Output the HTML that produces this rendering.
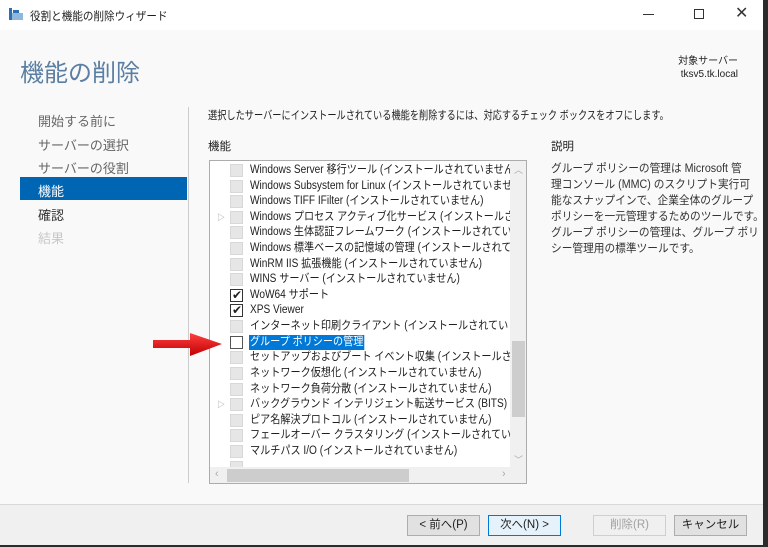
<!DOCTYPE html>
<html><head><meta charset="utf-8">
<style>
*{margin:0;padding:0;box-sizing:border-box}
body{width:768px;height:547px;overflow:hidden;background:#f9f9f9;font-family:"Liberation Sans","Noto Sans CJK JP",sans-serif;color:#1e1e1e;position:relative;font-size:12px}
.abs{position:absolute;white-space:nowrap}
.sx{display:inline-block;transform-origin:0 0}
.nav{position:absolute;left:38px;font-size:13px;color:#666}
.row{position:absolute;left:0;height:16px;line-height:15px;font-size:11.5px;white-space:nowrap;color:#1e1e1e}
.cb{position:absolute;left:20px;top:1px;width:13px;height:13px;background:#e6e6e6;border:1px solid #d8d8d8}
.cb.on{background:#fff;border:1px solid #333}
.cb.w{background:#fff;border:1px solid #555}
.row span.t{position:absolute;left:40px;transform:scaleX(.88);transform-origin:0 0}
.btn{position:absolute;top:515px;width:73px;height:21px;border:1px solid #adadad;background:#e1e1e1;font-size:11.5px;text-align:center;line-height:19px;color:#1e1e1e}
.desc div{height:16px;white-space:nowrap;transform:scaleX(.93);transform-origin:0 0}
</style></head><body>
<div class="abs" style="left:0;top:0;width:768px;height:30px;background:#fff"></div>
<svg class="abs" style="left:8px;top:7px" width="16" height="14"><rect x="1" y="1" width="3" height="12" fill="#2b6fb4"/><rect x="4" y="6" width="11" height="7" fill="#8fb8dc"/><rect x="5" y="3" width="6" height="3" fill="#2b6fb4"/></svg>
<div class="abs" style="left:30px;top:8px;font-size:11.5px"><span class="sx" style="transform:scaleX(.92)">役割と機能の削除ウィザード</span></div>
<div class="abs" style="left:643px;top:14px;width:11px;height:1px;background:#333"></div>
<div class="abs" style="left:694px;top:9px;width:10px;height:10px;border:1px solid #333"></div>
<div class="abs" style="left:735px;top:3px;font-size:16px;color:#333">✕</div>
<div class="abs" style="left:20px;top:53px;font-size:24px;color:#5a7fa3">機能の削除</div>
<div class="abs" style="left:600px;top:55px;width:138px;text-align:right;font-size:10px;line-height:13px">対象サーバー<br>tksv5.tk.local</div>
<div class="nav" style="top:111px">開始する前に</div>
<div class="nav" style="top:135px">サーバーの選択</div>
<div class="nav" style="top:158px">サーバーの役割</div>
<div class="abs" style="left:20px;top:177px;width:167px;height:23px;background:#0066b4"></div>
<div class="nav" style="top:181px;color:#fff">機能</div>
<div class="nav" style="top:205px;color:#333">確認</div>
<div class="nav" style="top:228px;color:#c8c8c8">結果</div>
<div class="abs" style="left:188px;top:107px;width:1px;height:376px;background:#ccc"></div>
<div class="abs" style="left:208px;top:107px;font-size:11.5px"><span class="sx" style="transform:scaleX(.80)">選択したサーバーにインストールされている機能を削除するには、対応するチェック ボックスをオフにします。</span></div>
<div class="abs" style="left:208px;top:138px;font-size:11.5px">機能</div>
<div class="abs" style="left:551px;top:138px;font-size:11.5px">説明</div>
<div class="abs desc" style="left:551px;top:161px;font-size:11.5px;line-height:16px;color:#333">
<div>グループ ポリシーの管理は Microsoft 管</div>
<div>理コンソール (MMC) のスクリプト実行可</div>
<div>能なスナップインで、企業全体のグループ</div>
<div>ポリシーを一元管理するためのツールです。</div>
<div>グループ ポリシーの管理は、グループ ポリ</div>
<div>シー管理用の標準ツールです。</div>
</div>
<div class="abs" style="left:763px;top:0;width:5px;height:547px;background:#2b2b2b"></div>
<div class="abs" style="left:209px;top:160px;width:318px;height:324px;background:#fff;border:1px solid #acacac;overflow:hidden">
<div style="position:absolute;left:0;top:0;width:300px;height:306px;overflow:hidden">
<div class="row" style="top:2px"><i class="cb"></i><span class="t">Windows Server 移行ツール (インストールされていません)</span></div>
<div class="row" style="top:18px"><i class="cb"></i><span class="t">Windows Subsystem for Linux (インストールされていません)</span></div>
<div class="row" style="top:33px"><i class="cb"></i><span class="t">Windows TIFF IFilter (インストールされていません)</span></div>
<div class="row" style="top:49px"><span style="position:absolute;left:7px;font-size:8px;color:#999">▷</span><i class="cb"></i><span class="t">Windows プロセス アクティブ化サービス (インストールされていません)</span></div>
<div class="row" style="top:64px"><i class="cb"></i><span class="t">Windows 生体認証フレームワーク (インストールされていません)</span></div>
<div class="row" style="top:80px"><i class="cb"></i><span class="t">Windows 標準ベースの記憶域の管理 (インストールされていません)</span></div>
<div class="row" style="top:96px"><i class="cb"></i><span class="t">WinRM IIS 拡張機能 (インストールされていません)</span></div>
<div class="row" style="top:111px"><i class="cb"></i><span class="t">WINS サーバー (インストールされていません)</span></div>
<div class="row" style="top:127px"><i class="cb on"></i><span style="position:absolute;left:22px;top:0;font-size:12px">✔</span><span class="t">WoW64 サポート</span></div>
<div class="row" style="top:142px"><i class="cb on"></i><span style="position:absolute;left:22px;top:0;font-size:12px">✔</span><span class="t">XPS Viewer</span></div>
<div class="row" style="top:158px"><i class="cb"></i><span class="t">インターネット印刷クライアント (インストールされていません)</span></div>
<div class="row" style="top:174px"><i class="cb w"></i><span class="t" style="background:#0078d7;color:#fff;padding:0 1px;left:39px">グループ ポリシーの管理</span></div>
<div class="row" style="top:189px"><i class="cb"></i><span class="t">セットアップおよびブート イベント収集 (インストールされていません)</span></div>
<div class="row" style="top:205px"><i class="cb"></i><span class="t">ネットワーク仮想化 (インストールされていません)</span></div>
<div class="row" style="top:221px"><i class="cb"></i><span class="t">ネットワーク負荷分散 (インストールされていません)</span></div>
<div class="row" style="top:236px"><span style="position:absolute;left:7px;font-size:8px;color:#999">▷</span><i class="cb"></i><span class="t">バックグラウンド インテリジェント転送サービス (BITS) (インストールされていません)</span></div>
<div class="row" style="top:252px"><i class="cb"></i><span class="t">ピア名解決プロトコル (インストールされていません)</span></div>
<div class="row" style="top:267px"><i class="cb"></i><span class="t">フェールオーバー クラスタリング (インストールされていません)</span></div>
<div class="row" style="top:283px"><i class="cb"></i><span class="t">マルチパス I/O (インストールされていません)</span></div>
<div class="row" style="top:299px"><i class="cb"></i></div>
</div>
<div style="position:absolute;left:300px;top:0;width:17px;height:306px;background:#f0f0f0"></div>
<div style="position:absolute;left:302px;top:180px;width:13px;height:76px;background:#cdcdcd"></div>
<div style="position:absolute;left:304px;top:2px;font-size:9px;color:#aaa">︿</div>
<div style="position:absolute;left:304px;top:292px;font-size:9px;color:#aaa">﹀</div>
<div style="position:absolute;left:0;top:306px;width:317px;height:17px;background:#f0f0f0"></div>
<div style="position:absolute;left:17px;top:308px;width:182px;height:13px;background:#cdcdcd"></div>
<div style="position:absolute;left:5px;top:307px;font-size:11px;color:#aaa">‹</div>
<div style="position:absolute;left:292px;top:307px;font-size:11px;color:#aaa">›</div>
</div>
<svg class="abs" style="left:150px;top:331px" width="76" height="28"><defs><linearGradient id="g" x1="0" y1="0" x2="0" y2="1"><stop offset="0" stop-color="#ff4040"/><stop offset="1" stop-color="#c00000"/></linearGradient></defs><polygon points="3,9 40,9 40,2 72,13 40,25 40,17 3,17" fill="url(#g)"/></svg>
<div class="abs" style="left:0;top:504px;width:763px;height:41px;background:#f0f0f0;border-top:1px solid #d9d9d9"></div>
<div class="abs" style="left:0;top:545px;width:768px;height:2px;background:#2b2b2b"></div>
<div class="btn" style="left:407px">&lt; 前へ(P)</div>
<div class="btn" style="left:488px;border:1px solid #0078d7;background:#e5f1fb">次へ(N) &gt;</div>
<div class="btn" style="left:593px;color:#a0a0a0;background:#f0f0f0;border-color:#cfcfcf">削除(R)</div>
<div class="btn" style="left:674px">キャンセル</div>
</body></html>
